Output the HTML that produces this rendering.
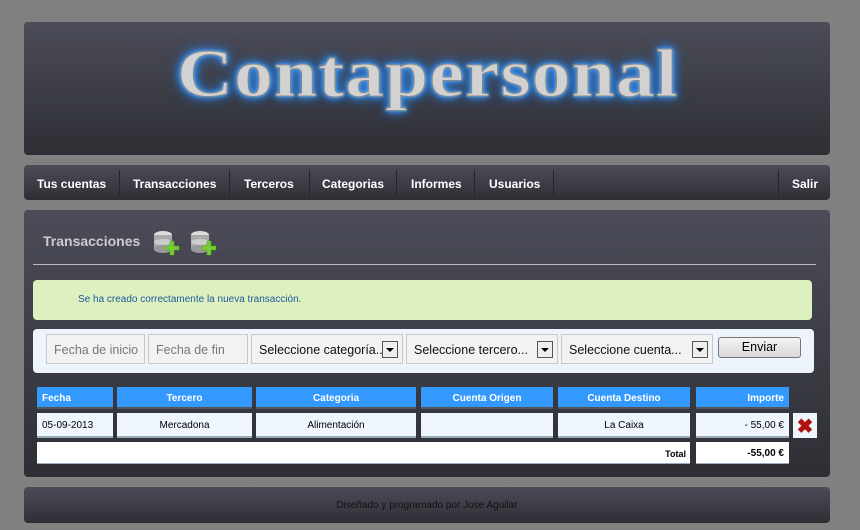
<!DOCTYPE html>
<html><head><meta charset="utf-8"><style>
*{margin:0;padding:0;box-sizing:border-box}
body{width:860px;height:530px;background:#808080;font-family:"Liberation Sans",sans-serif;position:relative;overflow:hidden}
.p{position:absolute;left:24px;width:806px;border-radius:4px;background:linear-gradient(#4b4c58,#2e2f35)}
.abs{position:absolute}
.nav a{position:absolute;top:12px;color:#fff;font-weight:bold;font-size:12px;text-decoration:none}
.sep{position:absolute;top:5px;width:1px;height:26px;background:#5a5b66;border-right:1px solid #25262b}
.c{position:absolute;font-size:10px;display:flex;align-items:center;justify-content:center;color:#000;padding-top:2px}
.h{background:#3399ff;color:#fff;font-weight:bold;border-bottom:2px solid #555}
.d{background:#eef5fc;border-bottom:2px solid #9ab}
.in{position:absolute;top:5px;height:30px;background:#f2f2f2;border:1px solid #c8c8c8;font-size:12.5px;color:#777;padding:8px 7px;white-space:nowrap;overflow:hidden}
.sel{color:#111}
.arr{position:absolute;right:4px;top:6px;width:16px;height:17px;border:1px solid #555;background:#eee}
.arr:after{content:"";position:absolute;left:3px;top:6px;border:4px solid transparent;border-top:4px solid #000}
</style></head><body>
<div class="p" style="top:22px;height:133px">
 <div class="abs" style="left:153px;top:12px;font-family:'Liberation Serif',serif;font-weight:bold;font-size:68px;color:#d2d2d2;letter-spacing:1px;transform:scaleX(1.14);transform-origin:0 0;-webkit-text-stroke:1px #888;text-shadow:0 0 2px #5ab0ff,0 0 4px #4aa0ff,0 0 6px #3b8fe8,0 0 10px #2a7ad8,0 0 14px #2a7ad8">Contapersonal</div>
</div>
<div class="p nav" style="top:165px;height:35px">
 <a style="left:13px">Tus cuentas</a><div class="sep" style="left:95px"></div>
 <a style="left:109px">Transacciones</a><div class="sep" style="left:205px"></div>
 <a style="left:220px">Terceros</a><div class="sep" style="left:285px"></div>
 <a style="left:298px">Categorias</a><div class="sep" style="left:372px"></div>
 <a style="left:387px">Informes</a><div class="sep" style="left:450px"></div>
 <a style="left:465px">Usuarios</a><div class="sep" style="left:529px"></div>
 <div class="sep" style="left:754px"></div><a style="left:768px">Salir</a>
</div>
<div class="p" style="top:210px;height:267px">
 <div class="abs" style="left:19px;top:23px;color:#ccc;font-weight:bold;font-size:14px">Transacciones</div>
 <svg class="abs" style="left:128px;top:19px" width="30" height="28"><ellipse cx="11" cy="6" rx="9" ry="4" fill="#ddd"/><rect x="2" y="6" width="18" height="14" fill="#aaa"/><ellipse cx="11" cy="20" rx="9" ry="4" fill="#999"/><ellipse cx="11" cy="13" rx="9" ry="3" fill="#ccc"/><path d="M18 12h4v5h5v4h-5v5h-4v-5h-5v-4h5z" fill="#7c3" stroke="#4a1" stroke-width=".5"/></svg>
 <svg class="abs" style="left:165px;top:19px" width="30" height="28"><ellipse cx="11" cy="6" rx="9" ry="4" fill="#ddd"/><rect x="2" y="6" width="18" height="14" fill="#aaa"/><ellipse cx="11" cy="20" rx="9" ry="4" fill="#999"/><ellipse cx="11" cy="13" rx="9" ry="3" fill="#ccc"/><path d="M18 12h4v5h5v4h-5v5h-4v-5h-5v-4h5z" fill="#7c3" stroke="#4a1" stroke-width=".5"/></svg>
 <div class="abs" style="left:9px;top:54px;width:783px;height:1px;background:#bbb"></div>
 <div class="abs" style="left:9px;top:70px;width:779px;height:40px;background:#dff0c0;border-radius:4px;font-size:10px;color:#1a5a9a;padding:14px 45px">Se ha creado correctamente la nueva transacción.</div>
 <div class="abs" style="left:9px;top:119px;width:781px;height:44px;background:#edf4fb;border-radius:4px">
  <div class="in" style="left:13px;width:99px">Fecha de inicio</div>
  <div class="in" style="left:115px;width:100px">Fecha de fin</div>
  <div class="in sel" style="left:218px;width:152px">Seleccione categoría...<div class="arr"></div></div>
  <div class="in sel" style="left:373px;width:152px">Seleccione tercero...<div class="arr"></div></div>
  <div class="in sel" style="left:528px;width:152px">Seleccione cuenta...<div class="arr"></div></div>
  <div class="abs" style="left:685px;top:8px;width:83px;height:21px;border:1px solid #777;border-radius:3px;background:linear-gradient(#f4f4f4,#d8d8d8);font-size:12.5px;text-align:center;line-height:19px">Enviar</div>
 </div>
</div>
<div class="c h" style="left:37px;top:387px;width:76px;height:22px;justify-content:flex-start;padding-left:5px">Fecha</div>
<div class="c h" style="left:117px;top:387px;width:135px;height:22px">Tercero</div>
<div class="c h" style="left:256px;top:387px;width:160px;height:22px">Categoria</div>
<div class="c h" style="left:421px;top:387px;width:132px;height:22px">Cuenta Origen</div>
<div class="c h" style="left:558px;top:387px;width:132px;height:22px">Cuenta Destino</div>
<div class="c h" style="left:696px;top:387px;width:93px;height:22px;justify-content:flex-end;padding-right:5px">Importe</div>
<div class="c d" style="left:37px;top:413px;width:76px;height:25px;justify-content:flex-start;padding-left:5px">05-09-2013</div>
<div class="c d" style="left:117px;top:413px;width:135px;height:25px">Mercadona</div>
<div class="c d" style="left:256px;top:413px;width:160px;height:25px">Alimentación</div>
<div class="c d" style="left:421px;top:413px;width:132px;height:25px"></div>
<div class="c d" style="left:558px;top:413px;width:132px;height:25px">La Caixa</div>
<div class="c d" style="left:696px;top:413px;width:93px;height:25px;justify-content:flex-end;padding-right:5px">- 55,00 €</div>
<div class="c" style="left:793px;top:413px;width:24px;height:25px;background:#eef5fc;color:#b01010;font-size:20px;font-weight:bold">✖</div>
<div class="c" style="left:37px;top:442px;width:653px;height:22px;background:#fff;border-bottom:1px solid #9ab;justify-content:flex-end;padding-right:4px;font-weight:bold;font-size:9px">Total</div>
<div class="c" style="left:696px;top:442px;width:93px;height:22px;background:#fff;border-bottom:1px solid #9ab;justify-content:flex-end;padding-right:5px;font-weight:bold">-55,00 €</div>
<div class="p" style="top:487px;height:36px;text-align:center;font-size:10px;color:#111;line-height:38px">Diseñado y programado por Jose Aguilar</div>
</body></html>
